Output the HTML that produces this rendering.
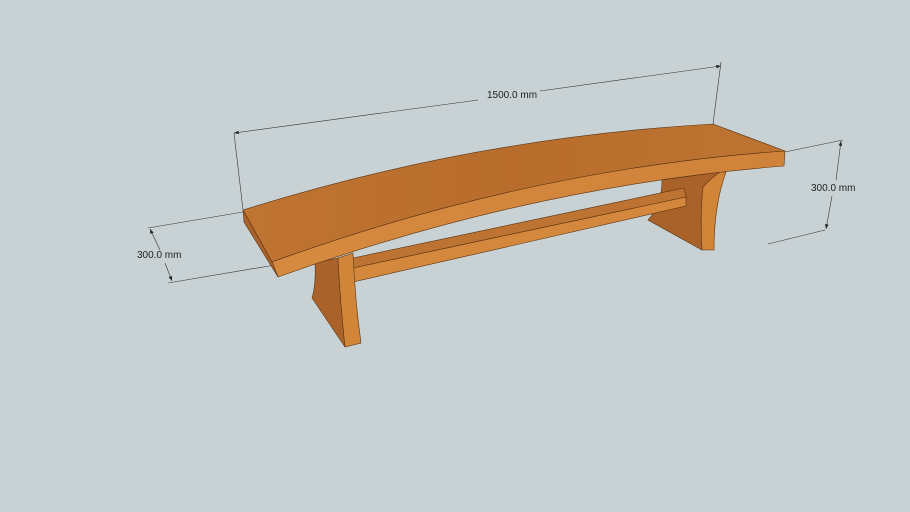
<!DOCTYPE html>
<html><head><meta charset="utf-8"><style>
html,body{margin:0;padding:0;background:#c8d2d5;}
svg{display:block}
text{font-family:"Liberation Sans",sans-serif;font-size:10px;fill:#222}
</style></head><body>
<svg width="910" height="512" viewBox="0 0 910 512" xmlns="http://www.w3.org/2000/svg">
<defs>
<linearGradient id="top" x1="0" y1="0" x2="1" y2="0">
<stop offset="0" stop-color="#bf7432"/><stop offset="0.5" stop-color="#b86d2c"/><stop offset="1" stop-color="#bd7431"/>
</linearGradient>
<linearGradient id="front" x1="0" y1="0" x2="1" y2="0">
<stop offset="0" stop-color="#d68a40"/><stop offset="1" stop-color="#cf833a"/>
</linearGradient>
<marker id="ar" markerWidth="8" markerHeight="6" refX="8" refY="3" orient="auto"><path d="M0,0 L8,3 L0,6z" fill="#222"/></marker>
</defs>
<g stroke="#333" stroke-width="0.6" fill="none">
<line x1="234" y1="133" x2="243" y2="210"/>
<line x1="721" y1="62" x2="713" y2="124"/>
<line x1="478" y1="100" x2="234" y2="133" marker-end="url(#ar)"/>
<line x1="540" y1="91" x2="721" y2="66" marker-end="url(#ar)"/>
<line x1="243" y1="212" x2="148" y2="228"/>
<line x1="275" y1="265" x2="168" y2="283"/>
<line x1="160" y1="250" x2="150" y2="229" marker-end="url(#ar)"/>
<line x1="165" y1="263" x2="172" y2="281" marker-end="url(#ar)"/>
<line x1="785" y1="152" x2="843" y2="140"/>
<line x1="768" y1="244" x2="825" y2="230"/>
<line x1="836" y1="180" x2="841" y2="141" marker-end="url(#ar)"/>
<line x1="832" y1="196" x2="826" y2="229" marker-end="url(#ar)"/>
</g>
<text x="487" y="98">1500.0 mm</text>
<text x="137" y="258">300.0 mm</text>
<text x="811" y="191">300.0 mm</text>

<!-- right leg -->
<path d="M662,180 L720,172 Q705,205 702,250 L648,220 Q662,205 662,180z" fill="#a9622a" stroke="#5a3210" stroke-width="0.6"/>
<path d="M703,187 Q711,178 720,172 L726,172 Q714,205 714,250 L702,250 Q700,215 703,187z" fill="#d08539" stroke="#5a3210" stroke-width="0.6"/>
<!-- stretcher -->
<path d="M353,258 L684,188 L686,197 L353,268z" fill="#bd7331" stroke="#5a3210" stroke-width="0.6"/>
<path d="M353,268 L686,197 L686,206 L353,282z" fill="#d3883d" stroke="#5a3210" stroke-width="0.6"/>
<!-- left leg -->
<path d="M315,263 L338,258 Q340,300 345,347 L312,298 Q316,285 315,263z" fill="#a9622a" stroke="#5a3210" stroke-width="0.6"/>
<path d="M338,258 L353,253 Q355,300 361,343 L345,347 Q340,300 338,258z" fill="#d08539" stroke="#5a3210" stroke-width="0.6"/>
<!-- seat -->
<path d="M243,210 Q472,138 713,124 L785,151 Q528,169 272,262z" fill="url(#top)" stroke="#5a3210" stroke-width="0.6"/>
<path d="M272,262 Q528,169 785,151 L784,166 Q531,186 278,277z" fill="url(#front)" stroke="#5a3210" stroke-width="0.6"/>
<path d="M243,210 L272,262 L278,277 L244,222z" fill="#a9622a" stroke="#5a3210" stroke-width="0.6"/>
</svg>
</body></html>
